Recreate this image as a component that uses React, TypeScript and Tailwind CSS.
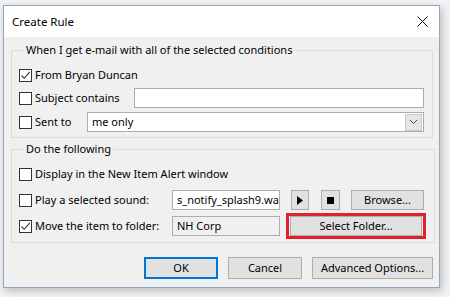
import React from "react";

const font = { fontFamily: '"Noto Sans", "Open Sans", sans-serif' };

function Check({ checked }: { checked?: boolean }) {
  return (
    <span className="w-[13px] h-[13px] border border-[#333333] bg-white flex items-center justify-center shrink-0">
      {checked && (
        <svg width="11" height="11" viewBox="0 0 11 11">
          <path d="M1.5 5.5 L4.2 8.3 L9.8 1.8" fill="none" stroke="#333" strokeWidth="1.1" />
        </svg>
      )}
    </span>
  );
}

function Btn({ children, className = "" }: { children?: React.ReactNode; className?: string }) {
  return (
    <div className={`h-[20px] bg-[#e1e1e1] border border-[#adadad] flex items-center justify-center text-[11px] text-black ${className}`}>
      {children}
    </div>
  );
}

export default function App() {
  return (
    <div className="w-[450px] h-[297px] bg-[#f2f2f2] pl-[3px] pt-[5px] overflow-hidden" style={font}>
      <div className="w-[437px] h-[283px] border border-[#8ea8c3] bg-[#f0f0f0] flex flex-col shadow-[2px_3px_8px_rgba(0,0,0,0.22)]">
        {/* Title bar */}
        <div className="h-[31px] bg-white flex items-center justify-between pl-[8px] pr-[11px]">
          <span className="text-[11.5px] text-black leading-none">Create Rule</span>
          <svg width="11" height="11" viewBox="0 0 11 11">
            <path d="M0.5 0.5 L10.5 10.5 M10.5 0.5 L0.5 10.5" stroke="#111" strokeWidth="1" />
          </svg>
        </div>

        <div className="pl-[7px] flex flex-col text-[11px] text-black">
          {/* Group 1 */}
          <fieldset className="w-[422px] mt-[5px] border border-[#dcdcdc] pl-[7px] pr-[8px] pb-[5px] flex flex-col">
            <legend className="ml-[4px] px-[3px] leading-[16px]">
              When I get e-mail with all of the selected conditions
            </legend>
            <div className="h-[20px] mt-[7px] flex items-center gap-[3px]">
              <Check checked />
              <span>From Bryan Duncan</span>
            </div>
            <div className="h-[20px] mt-[3px] flex items-center">
              <Check />
              <span className="ml-[3px]">Subject contains</span>
              <div className="ml-auto w-[290px] h-[20px] bg-white border border-[#adadad]"></div>
            </div>
            <div className="h-[20px] mt-[4px] flex items-center">
              <Check />
              <span className="ml-[3px]">Sent to</span>
              <div className="ml-auto w-[337px] h-[20px] bg-white border border-[#adadad] flex items-center pl-[4px] pr-[1px]">
                <span className="flex-1">me only</span>
                <div className="w-[17px] h-[17px] bg-[#e5e5e5] border border-[#c9c9c9] flex items-center justify-center">
                  <svg width="9" height="6" viewBox="0 0 9 6">
                    <path d="M1 1 L4.5 4.5 L8 1" fill="none" stroke="#444" strokeWidth="1" />
                  </svg>
                </div>
              </div>
            </div>
          </fieldset>

          {/* Group 2 */}
          <fieldset className="w-[422px] mt-[3px] border border-[#dcdcdc] pl-[7px] pr-[8px] pb-[6px] flex flex-col">
            <legend className="ml-[4px] px-[3px] leading-[16px]">Do the following</legend>
            <div className="h-[20px] mt-[7px] flex items-center gap-[3px]">
              <Check />
              <span>Display in the New Item Alert window</span>
            </div>
            <div className="h-[20px] mt-[6px] flex items-center">
              <Check />
              <span className="ml-[3px] w-[137px]">Play a selected sound:</span>
              <div className="w-[108px] h-[20px] bg-white border border-[#adadad] flex items-center pl-[4px] whitespace-nowrap">
                s_notify_splash9.wa
              </div>
              <Btn className="ml-[11px] w-[18px]">
                <svg width="6" height="9" viewBox="0 0 6 9">
                  <path d="M0 0 L6 4.5 L0 9 Z" fill="#000" />
                </svg>
              </Btn>
              <Btn className="ml-[12px] w-[19px]">
                <span className="w-[7px] h-[7px] bg-black"></span>
              </Btn>
              <Btn className="ml-[11px] w-[73px]">Browse...</Btn>
            </div>
            <div className="h-[20px] mt-[6px] flex items-center">
              <Check checked />
              <span className="ml-[3px] w-[137px]">Move the item to folder:</span>
              <div className="w-[108px] h-[20px] bg-[#f0f0f0] border border-[#adadad] flex items-center pl-[4px]">
                NH Corp
              </div>
              <div className="ml-[6px] border-[3px] border-[#e3202b] px-[1px] flex">
                <Btn className="w-[132px]">Select Folder...</Btn>
              </div>
            </div>
          </fieldset>

          {/* Buttons */}
          <div className="w-[422px] mt-[14px] flex justify-end gap-[10px]">
            <div className="w-[74px] h-[22px] bg-[#e1e1e1] border-2 border-[#0078d7] flex items-center justify-center">OK</div>
            <div className="w-[74px] h-[22px] bg-[#e1e1e1] border border-[#adadad] flex items-center justify-center">Cancel</div>
            <div className="w-[121px] h-[22px] bg-[#e1e1e1] border border-[#adadad] flex items-center justify-center">Advanced Options...</div>
          </div>
        </div>
      </div>
    </div>
  );
}
